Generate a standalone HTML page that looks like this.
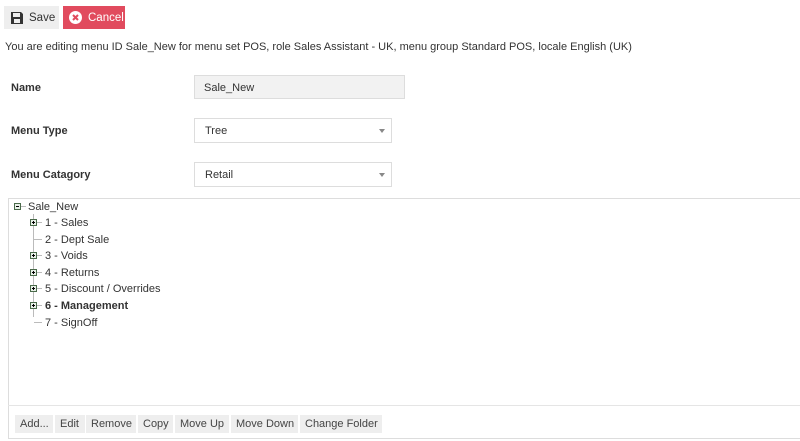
<!DOCTYPE html>
<html><head><style>
body{margin:0;width:800px;height:441px;overflow:hidden;background:#fff;font-family:"Liberation Sans",sans-serif;color:#333;font-size:11px;position:relative}
.abs{position:absolute}
.btn{position:absolute;top:6px;height:23px;line-height:25px;font-size:11.5px;box-sizing:border-box}
.lbl{position:absolute;left:11px;font-weight:bold;font-size:11px;color:#333}
.inp{position:absolute;left:194px;box-sizing:border-box;border:1px solid #ddd;height:25px;line-height:25px;padding-left:9px;font-size:11px}
.caret{position:absolute;right:6px;top:10px;width:0;height:0;border-left:3px solid transparent;border-right:3px solid transparent;border-top:4px solid #888}
.tree{position:absolute;left:8px;top:198px;width:800px;height:241px;border:1px solid #ddd;box-sizing:border-box}
.node{position:absolute;font-size:11px;line-height:13px;white-space:nowrap}
.pm{position:absolute;width:7px;height:7px;border:1px solid #4a6a4a;background:#e8f0e8;box-sizing:border-box}
.pm:before{content:"";position:absolute;left:1px;top:2px;width:3px;height:1px;background:#000}
.pm.p:after{content:"";position:absolute;left:2px;top:1px;width:1px;height:3px;background:#000}
.bb{position:absolute;top:415px;height:18px;line-height:19px;background:#eee;font-size:11px;padding:0 5px;box-sizing:border-box;color:#444;white-space:nowrap}
</style></head><body>
<div class="btn" style="left:4px;width:55px;background:#eee;color:#333;padding-left:7px">
<svg width="12" height="12" style="position:absolute;left:7px;top:6px" viewBox="0 0 12 12"><path d="M0 0H10L12 2V12H0Z" fill="#333"/><rect x="2" y="1" width="7" height="4" fill="#eee"/><rect x="3" y="7" width="6" height="4" fill="#eee"/></svg>
<span style="position:absolute;left:25px">Save</span></div>
<div class="btn" style="left:63px;width:62px;background:#e14b5e;color:#fff">
<svg width="13" height="13" style="position:absolute;left:6px;top:5px" viewBox="0 0 13 13"><circle cx="6.5" cy="6.5" r="6.5" fill="#fff"/><path d="M4 4L9 9M9 4L4 9" stroke="#e14b5e" stroke-width="2"/></svg>
<span style="position:absolute;left:25px">Cancel</span></div>
<div class="abs" style="left:5px;top:41px;font-size:11px">You are editing menu ID Sale_New for menu set POS, role Sales Assistant - UK, menu group Standard POS, locale English (UK)</div>
<div class="lbl" style="top:82px">Name</div>
<div class="inp" style="top:75px;width:211px;height:24px;background:#f2f2f2">Sale_New</div>
<div class="lbl" style="top:125px">Menu Type</div>
<div class="inp" style="top:118px;width:198px;padding-left:10px">Tree<div class="caret"></div></div>
<div class="lbl" style="top:169px">Menu Catagory</div>
<div class="inp" style="top:162px;width:198px;padding-left:10px">Retail<div class="caret"></div></div>
<div class="tree"></div>
<div class="abs" style="left:33px;top:214px;width:1px;height:103px;background:#bbb"></div>
<div class="pm" style="left:14px;top:203px"></div><div class="abs" style="left:21px;top:206px;width:5px;height:1px;background:#bbb"></div>
<div class="node" style="left:28px;top:201px">Sale_New</div>
<div class="pm p" style="left:30px;top:219px"></div><div class="abs" style="left:37px;top:222px;width:5px;height:1px;background:#bbb"></div><div class="node" style="left:45px;top:217px">1 - Sales</div>
<div class="abs" style="left:34px;top:239px;width:8px;height:1px;background:#bbb"></div><div class="node" style="left:45px;top:234px">2 - Dept Sale</div>
<div class="pm p" style="left:30px;top:252px"></div><div class="abs" style="left:37px;top:255px;width:5px;height:1px;background:#bbb"></div><div class="node" style="left:45px;top:250px">3 - Voids</div>
<div class="pm p" style="left:30px;top:269px"></div><div class="abs" style="left:37px;top:272px;width:5px;height:1px;background:#bbb"></div><div class="node" style="left:45px;top:267px">4 - Returns</div>
<div class="pm p" style="left:30px;top:285px"></div><div class="abs" style="left:37px;top:288px;width:5px;height:1px;background:#bbb"></div><div class="node" style="left:45px;top:283px">5 - Discount / Overrides</div>
<div class="pm p" style="left:30px;top:302px"></div><div class="abs" style="left:37px;top:305px;width:5px;height:1px;background:#bbb"></div><div class="node" style="left:45px;top:300px;font-weight:bold">6 - Management</div>
<div class="abs" style="left:34px;top:322px;width:8px;height:1px;background:#bbb"></div><div class="node" style="left:45px;top:317px">7 - SignOff</div>
<div class="abs" style="left:8px;top:405px;width:792px;height:1px;background:#e5e5e5"></div>
<div class="bb" style="left:15px;width:38px">Add...</div>
<div class="bb" style="left:55px;width:30px">Edit</div>
<div class="bb" style="left:86px;width:50px">Remove</div>
<div class="bb" style="left:138px;width:35px">Copy</div>
<div class="bb" style="left:175px;width:54px">Move Up</div>
<div class="bb" style="left:231px;width:67px">Move Down</div>
<div class="bb" style="left:300px;width:82px">Change Folder</div>
</body></html>
